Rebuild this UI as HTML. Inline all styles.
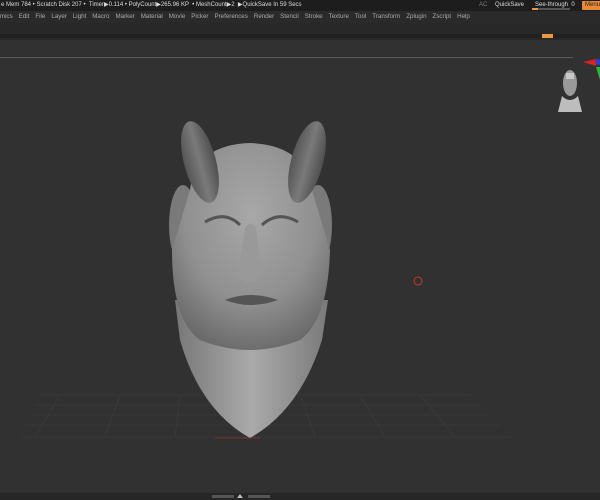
<!DOCTYPE html>
<html><head><style>
html,body{margin:0;padding:0;width:600px;height:500px;overflow:hidden;background:#303030;font-family:"Liberation Sans",sans-serif}
.top{position:absolute;left:0;top:0;width:600px;height:11px;background:#1d1d1d;color:#ddd;font-size:6px;line-height:11px;white-space:nowrap}
.menu{position:absolute;left:0;top:11px;width:600px;height:12px;background:#2a2a2a;color:#aaa;font-size:6.2px;line-height:12px;white-space:nowrap}
.menu span{margin-right:6px}
.bar2{position:absolute;left:0;top:23px;width:600px;height:17px;background:#282828}
.bar3{position:absolute;left:0;top:34px;width:600px;height:4px;background:#202020}
.canvas{position:absolute;left:0;top:40px;width:600px;height:453px;background:#313131}
.bottom{position:absolute;left:0;top:493px;width:600px;height:7px;background:#262626}
</style></head><body>
<div class="top"><span style="margin-left:1px">e Mem 784 • Scratch Disk 207 • &nbsp;Timer▶0.114 • PolyCount▶265.96 KP &nbsp;• MeshCount▶2 &nbsp;▶QuickSave In 59 Secs</span>
<span style="position:absolute;left:479px;color:#777">AC</span>
<span style="position:absolute;left:495px">QuickSave</span>
<span style="position:absolute;left:535px">See-through &nbsp;0</span>
<div style="position:absolute;left:532px;top:8px;width:38px;height:2px;background:#555"></div>
<div style="position:absolute;left:532px;top:8px;width:6px;height:2px;background:#e89a40"></div>
<span style="position:absolute;left:582px;top:1px;height:9px;line-height:9px;background:#e8893a;color:#222;padding:0 3px;border-radius:1px">Menus</span>
</div>
<div class="menu"><span>mics</span><span>Edit</span><span>File</span><span>Layer</span><span>Light</span><span>Macro</span><span>Marker</span><span>Material</span><span>Movie</span><span>Picker</span><span>Preferences</span><span>Render</span><span>Stencil</span><span>Stroke</span><span>Texture</span><span>Tool</span><span>Transform</span><span>Zplugin</span><span>Zscript</span><span>Help</span></div>
<div class="bar2"></div><div class="bar3"></div>
<div style="position:absolute;left:542px;top:34px;width:11px;height:4px;background:#e89a40"></div>
<div class="canvas"></div>
<div class="bottom"></div>
<div style="position:absolute;left:0;top:57px;width:573px;height:1px;background:#5a5a5a"></div>
<svg style="position:absolute;left:0;top:0" width="600" height="500">
<defs>
<radialGradient id="sk" cx="0.5" cy="0.35" r="0.7"><stop offset="0" stop-color="#a8a8a8"/><stop offset="0.6" stop-color="#909090"/><stop offset="1" stop-color="#666"/></radialGradient>
<linearGradient id="hn" x1="0" y1="0" x2="1" y2="0"><stop offset="0" stop-color="#555"/><stop offset="0.5" stop-color="#7a7a7a"/><stop offset="1" stop-color="#4e4e4e"/></linearGradient>
<linearGradient id="nk" x1="0" y1="0" x2="1" y2="0"><stop offset="0" stop-color="#777"/><stop offset="0.5" stop-color="#aaa"/><stop offset="1" stop-color="#7a7a7a"/></linearGradient>
</defs>
<g stroke="#444" stroke-width="0.6" fill="none" opacity="0.7">
<path d="M40 395 L470 395 M35 405 L480 405 M30 415 L490 415 M25 425 L500 425 M20 437 L510 437"/>
<path d="M60 395 L35 437 M120 395 L105 437 M180 395 L175 437 M240 395 L245 437 M300 395 L315 437 M360 395 L385 437 M420 395 L455 437"/>
</g>
<path d="M175 300 L180 340 Q200 410 250 438 Q300 410 322 340 L328 300 Z" fill="url(#nk)"/>
<ellipse cx="183" cy="225" rx="14" ry="40" fill="#7a7a7a"/>
<ellipse cx="318" cy="225" rx="14" ry="40" fill="#7a7a7a"/>
<path d="M190 190 Q195 145 250 143 Q305 145 312 190 L330 250 Q328 320 300 340 Q250 360 200 340 Q172 320 172 250 Z" fill="url(#sk)"/>
<ellipse cx="200" cy="162" rx="16" ry="42" transform="rotate(-15 200 162)" fill="url(#hn)"/>
<ellipse cx="307" cy="162" rx="16" ry="42" transform="rotate(15 307 162)" fill="url(#hn)"/>
<path d="M205 222 Q225 210 240 225 M262 225 Q278 210 298 222" stroke="#555" stroke-width="3" fill="none"/>
<path d="M245 228 Q250 220 256 228 L262 275 Q250 290 238 275 Z" fill="#999"/>
<path d="M225 300 Q250 290 278 300 Q250 310 225 300 Z" fill="#555"/>
<ellipse cx="418" cy="281" rx="4" ry="4" fill="none" stroke="#c23a2a" stroke-width="1"/>
<path d="M215 438 L260 438" stroke="#7a3030" stroke-width="1"/>
<path d="M583 62 L596 59 L596 66 Z" fill="#e02020"/>
<circle cx="598" cy="62" r="3" fill="#2040e0"/>
<path d="M596 67 L600 67 L600 80 Z" fill="#20c020"/>
<path d="M562 96 Q570 104 578 96 L582 112 L558 112 Z" fill="#bdbdbd"/>
<ellipse cx="570" cy="83" rx="7" ry="13" fill="#9a9a9a"/>
<rect x="566" y="73" width="8" height="6" fill="#c9c9c9"/>
<rect x="212" y="495" width="22" height="3" fill="#555"/>
<rect x="248" y="495" width="22" height="3" fill="#555"/>
<path d="M237 498 L240 494 L243 498 Z" fill="#bbb"/>
</svg>
</body></html>
